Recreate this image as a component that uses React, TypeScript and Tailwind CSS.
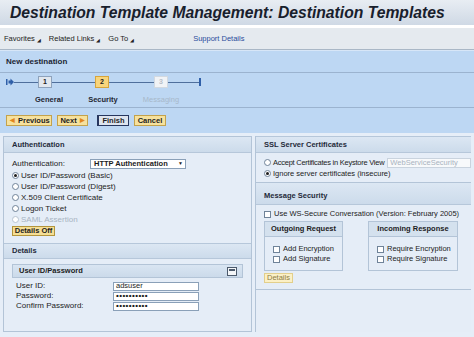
const body = { fontFamily: '"Liberation Sans", Arial, sans-serif' };

function Radio({ checked, disabled, label, tight }: { checked?: boolean; disabled?: boolean; label: string; tight?: boolean }) {
  return (
    <div className={`flex h-[11px] items-center gap-[2px] ${disabled ? 'text-[#a8b4c2]' : 'text-[#1c1c1c]'}`}>
      <span
        className={`flex h-[7px] w-[7px] items-center justify-center rounded-full border bg-white ${
          disabled ? 'border-[#b8c4d2]' : 'border-[#6f8399]'
        }`}
      >
        {checked && <span className="h-[3px] w-[3px] rounded-full bg-[#1c1c1c]" />}
      </span>
      <span className={tight ? 'tracking-[-0.25px]' : ''}>{label}</span>
    </div>
  );
}

function Check({ label }: { label: string }) {
  return (
    <div className="flex h-[10px] items-center gap-[3px]">
      <span className="h-[7px] w-[7px] border border-[#6f8399] bg-white" />
      <span>{label}</span>
    </div>
  );
}

function YButton({ children, className = '' }: { children: React.ReactNode; className?: string }) {
  return (
    <div
      className={`flex h-[11px] items-center gap-[3px] border border-[#c3a24c] bg-[#f6e19d] px-[3px] text-[7.5px] font-bold text-[#1e1e1e] ${className}`}
    >
      {children}
    </div>
  );
}

function Header({ children, className = '' }: { children: React.ReactNode; className?: string }) {
  return (
    <div
      className={`flex shrink-0 items-center border-b border-[#b6c7da] bg-gradient-to-b from-[#dce7f3] to-[#ccdbeb] pl-[8px] text-[7.5px] font-bold text-[#1f2a3a] ${className}`}
    >
      {children}
    </div>
  );
}

function Step({ n, state }: { n: string; state: 'done' | 'active' | 'off' }) {
  const cls =
    state === 'active'
      ? 'border-[#d7a53c] bg-[#f8d57c] text-[#222]'
      : state === 'done'
      ? 'border-[#8ea2bb] bg-[#e1e7ee] text-[#222]'
      : 'border-[#d2d9e1] bg-[#f1f3f6] text-[#b9c1ca]';
  return (
    <div className={`flex h-[12px] w-[14px] items-center justify-center border text-[7px] font-bold ${cls}`}>{n}</div>
  );
}

export default function App() {
  return (
    <div className="flex h-[337px] w-[474px] flex-col overflow-hidden bg-[#e6eef8]" style={body}>
      <div className="flex h-[25px] shrink-0 items-center whitespace-nowrap bg-gradient-to-b from-[#e8edf3] to-[#cfd9e5] pl-[10px] text-[15.7px] font-bold italic text-[#18202c]">
        Destination Template Management: Destination Templates
      </div>
      <div className="h-[3px] shrink-0 bg-white" />
      <div className="flex h-[22px] shrink-0 items-center border-b border-[#a9b7c6] bg-[#e5eaef] pl-[4px] text-[7.5px] text-[#222]">
        <span>Favorites</span>
        <span className="ml-[2px] mt-[4px] text-[5px]">◢</span>
        <span className="ml-[8px]">Related Links</span>
        <span className="ml-[2px] mt-[4px] text-[5px]">◢</span>
        <span className="ml-[8px]">Go To</span>
        <span className="ml-[2px] mt-[4px] text-[5px]">◢</span>
        <span className="ml-[59px] text-[#2a4c9c]">Support Details</span>
      </div>

      <div className="shrink-0 border-t border-[#d7e6f7] bg-[#bdd7f3]">
        <div className="flex h-[22px] items-center border-b border-[#9bb3cf] pl-[6px] text-[8px] font-bold text-[#1c2533]">
          New destination
        </div>
        <div className="h-[35px] border-b border-[#9bb3cf] pt-[3px]">
          <div className="flex h-[12px] items-center pl-[6px]">
            <svg width="8" height="8" viewBox="0 0 8 8">
              <rect x="0" y="1" width="1.5" height="6" fill="#2f5fa8" />
              <path d="M2.5 2.5h2V0.5L8 4 4.5 7.5V5.5h-2z" fill="#2f5fa8" />
            </svg>
            <div className="h-px w-[24px] bg-[#4f6f9c]" />
            <Step n="1" state="done" />
            <div className="h-px w-[43px] bg-[#4f6f9c]" />
            <Step n="2" state="active" />
            <div className="h-px w-[45px] bg-[#4f6f9c]" />
            <Step n="3" state="off" />
            <div className="h-px w-[31px] bg-[#4f6f9c]" />
            <div className="h-[8px] w-[2px] bg-[#2f5fa8]" />
          </div>
          <div className="mt-[6px] flex text-[7.5px] font-bold">
            <div className="ml-[25px] w-[48px] text-center text-[#1f2733]">General</div>
            <div className="ml-[6px] w-[48px] text-center text-[#1f2733]">Security</div>
            <div className="ml-[10px] w-[48px] text-center font-normal text-[#a7b7ca]">Messaging</div>
          </div>
        </div>
        <div className="flex h-[25px] items-center pl-[6px]">
          <YButton className="w-[46px]">
            <span className="text-[6px] text-[#e2851c]">◀</span>
            Previous
          </YButton>
          <YButton className="ml-[5px] w-[31px] justify-center">
            Next
            <span className="text-[6px] text-[#e2851c]">▶</span>
          </YButton>
          <div className="ml-[9px] flex h-[11px] w-[32px] items-center justify-center border border-l-2 border-[#27375f] bg-[#dde4ee] text-[7.5px] font-bold text-[#1e1e1e]">
            Finish
          </div>
          <YButton className="ml-[5px] w-[32px] justify-center">Cancel</YButton>
        </div>
      </div>

      <div className="flex min-h-0 flex-1 gap-[3px] px-[3px] pb-[5px] pt-[3px] text-[8px] text-[#1c1c1c]">
        <div className="flex w-[249px] flex-col border border-[#b3c4d7] bg-[#e5edf7]">
          <Header className="h-[16px]">Authentication</Header>
          <div className="px-[8px] pt-[6px]">
            <div className="flex h-[10px] items-center">
              <span className="w-[78px]">Authentication:</span>
              <div className="flex h-[10px] w-[96px] items-center justify-between border border-[#8aa0b8] bg-white pl-[3px] pr-[2px] text-[7.5px] font-bold">
                HTTP Authentication
                <span className="text-[5px]">▼</span>
              </div>
            </div>
            <div className="mt-[1px]">
              <Radio checked label="User ID/Password (Basic)" />
              <Radio label="User ID/Password (Digest)" />
              <Radio label="X.509 Client Certificate" />
              <Radio label="Logon Ticket" />
              <Radio disabled label="SAML Assertion" />
            </div>
            <div className="mt-[1px] flex h-[10px] w-[43px] items-center justify-center border border-[#b3953c] bg-[#f5de94] text-[7.5px] font-bold">
              Details Off
            </div>
          </div>
          <Header className="mt-[7px] h-[16px] border-t">Details</Header>
          <div className="px-[8px] pt-[5px]">
            <div className="flex h-[14px] items-center justify-between border border-[#b3c4d7] bg-gradient-to-b from-[#d9e5f2] to-[#cbdaea] pl-[6px] pr-[5px] text-[7.5px] font-bold">
              User ID/Password
              <div className="h-[9px] w-[10px] border border-[#4c5a6c] bg-[#f4f6f8] pt-[1px]">
                <div className="mx-[1px] h-[2px] bg-[#4c5a6c]" />
              </div>
            </div>
            <div className="mt-[3px] pl-[4px]">
              {[
                ['User ID:', 'adsuser'],
                ['Password:', '••••••••••'],
                ['Confirm Password:', '••••••••••'],
              ].map(([l, v], i) => (
                <div key={i} className="flex h-[10px] items-center">
                  <span className="w-[97px]">{l}</span>
                  <div
                    className={`flex h-[9px] w-[86px] items-center overflow-hidden border border-[#8aa0b8] bg-white pl-[2px] leading-none ${
                      i ? 'text-[8px] font-bold tracking-[0.4px]' : 'text-[7.5px]'
                    }`}
                  >
                    {v}
                  </div>
                </div>
              ))}
            </div>
          </div>
        </div>

        <div className="flex flex-1 flex-col border-l border-[#b3c4d7] bg-[#e5edf7] text-[7.5px]">
          <Header className="h-[17px] border-t">SSL Server Certificates</Header>
          <div className="h-[30px] shrink-0 border-b border-[#b3c4d7] pl-[8px] pt-[4px]">
            <div className="flex items-center">
              <Radio tight label="Accept Certificates in Keystore View" />
              <div className="ml-[3px] flex h-[10px] flex-1 items-center border border-[#c9d3de] bg-[#f7f9fb] pl-[2px] text-[#a9b3bf]">
                WebServiceSecurity
              </div>
            </div>
            <Radio checked label="Ignore server certificates (insecure)" />
          </div>
          <Header className="h-[22px] pt-[4px]">Message Security</Header>
          <div className="shrink-0 border-b border-[#b3c4d7] pb-[6px] pl-[8px] pt-[4px]">
            <Check label="Use WS-Secure Conversation (Version: February 2005)" />
            <div className="mt-[2px] flex gap-[25px]">
              {[
                ['Outgoing Request', 'Add Encryption', 'Add Signature', 'w-[79px]'],
                ['Incoming Response', 'Require Encryption', 'Require Signature', 'w-[90px]'],
              ].map(([h, a, b, w]) => (
                <div key={h} className={`${w} h-[50px] border border-[#b3c4d7]`}>
                  <div className="flex h-[15px] items-center justify-center border-b border-[#b3c4d7] bg-[#d4e1ee] font-bold">
                    {h}
                  </div>
                  <div className="pl-[8px] pt-[7px]">
                    <Check label={a} />
                    <Check label={b} />
                  </div>
                </div>
              ))}
            </div>
            <div className="mt-[2px] flex h-[10px] w-[29px] items-center justify-center border border-[#e2cf8c] bg-[#fbf0c6] text-[#8c7d45]">
              Details
            </div>
          </div>
        </div>
      </div>
    </div>
  );
}
